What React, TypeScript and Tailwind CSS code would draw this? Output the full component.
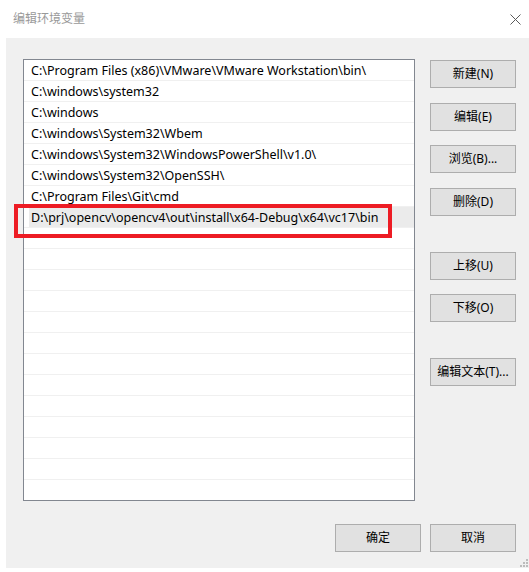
import React from 'react';

const paths = [
  'C:\\Program Files (x86)\\VMware\\VMware Workstation\\bin\\',
  'C:\\windows\\system32',
  'C:\\windows',
  'C:\\windows\\System32\\Wbem',
  'C:\\windows\\System32\\WindowsPowerShell\\v1.0\\',
  'C:\\windows\\System32\\OpenSSH\\',
  'C:\\Program Files\\Git\\cmd',
  'D:\\prj\\opencv\\opencv4\\out\\install\\x64-Debug\\x64\\vc17\\bin',
];

const SELECTED = 7;
const ROW_COUNT = 21;

const font = { fontFamily: '"Noto Sans", "Noto Sans CJK SC", sans-serif' };

const DlgButton: React.FC<{ label: string; className?: string }> = ({ label, className = '' }) => (
  <button
    className={`w-[86px] h-[28px] bg-[#e1e1e1] border border-[#adadad] text-[12px] text-black leading-none flex items-center justify-center ${className}`}
  >
    {label}
  </button>
);

// little dotted triangle in the bottom-right corner
const SizeGrip = () => (
  <svg width="9" height="9" viewBox="0 0 9 9" className="absolute right-[1px] bottom-[1px]">
    {[
      [7, 1],
      [4, 4], [7, 4],
      [1, 7], [4, 7], [7, 7],
    ].map(([x, y], i) => (
      <rect key={i} x={x} y={y} width="2" height="2" fill="#bcbcbc" />
    ))}
  </svg>
);

export default function App() {
  return (
    <div className="relative w-[529px] h-[572px] bg-white overflow-hidden" style={font}>
      {/* title bar */}
      <div className="h-[38px] flex items-center justify-between pl-[13px] pr-[8px]">
        <span className="text-[12px] text-[#999999] leading-none">编辑环境变量</span>
        <svg width="11" height="11" viewBox="0 0 11 11">
          <path d="M0.5 0.5 L10.5 10.5 M10.5 0.5 L0.5 10.5" stroke="#5a5a5a" strokeWidth="1" />
        </svg>
      </div>

      {/* client area */}
      <div className="relative ml-[6px] w-[523px] h-[530px] bg-[#f0f0f0] flex flex-col">
        <div className="flex pt-[21px] pl-[17px]">
          {/* path list */}
          <div className="w-[392px] h-[442px] bg-white border border-[#828790] overflow-hidden">
            {Array.from({ length: ROW_COUNT }).map((_, i) => (
              <div key={i} className="h-[21px] border-b border-[#f0f0f0] flex">
                <div
                  className={`flex-1 flex items-center pt-[2px] ${i === SELECTED ? 'ml-[5px] pl-[2px] bg-[#ebebeb]' : 'pl-[7px]'}`}
                >
                  <span className="text-[12.5px] text-black leading-none whitespace-nowrap">{paths[i] ?? ''}</span>
                </div>
              </div>
            ))}
          </div>

          {/* side buttons */}
          <div className="ml-[15px] pt-[1px] flex flex-col">
            <DlgButton label="新建(N)" />
            <DlgButton label="编辑(E)" className="mt-[15px]" />
            <DlgButton label="浏览(B)..." className="mt-[14px]" />
            <DlgButton label="删除(D)" className="mt-[15px]" />
            <DlgButton label="上移(U)" className="mt-[36px]" />
            <DlgButton label="下移(O)" className="mt-[14px]" />
            <DlgButton label="编辑文本(T)..." className="mt-[36px]" />
          </div>
        </div>

        <div className="flex justify-end gap-[9px] pr-[13px] mt-[23px]">
          <DlgButton label="确定" />
          <DlgButton label="取消" />
        </div>

        <SizeGrip />
      </div>

      {/* highlight around the opencv entry */}
      <div className="absolute left-[14px] top-[204px] w-[378px] h-[34px] border-4 border-[#ed1c24]" />
    </div>
  );
}
